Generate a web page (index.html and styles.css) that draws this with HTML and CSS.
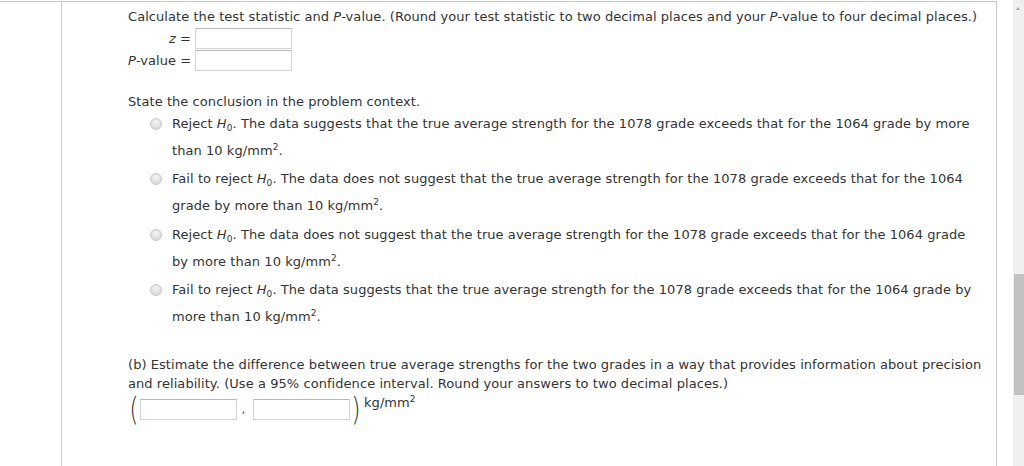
FILE: index.html
```html
<!DOCTYPE html>
<html>
<head>
<meta charset="utf-8">
<link rel="stylesheet" href="styles.css">
</head>
<body>
<div class="window">
  <div class="frame">
    <div class="content">
      <p class="intro">Calculate the test statistic and <i>P</i>-value. (Round your test statistic to two decimal places and your <i>P</i>-value to four decimal places.)</p>
      <div class="answers">
        <span class="lbl"><i>z</i> =</span><span class="box"></span>
        <span class="lbl"><i>P</i>-value =</span><span class="box"></span>
      </div>
      <p class="prompt">State the conclusion in the problem context.</p>
      <ul class="options">
        <li class="opt"><span class="radio"></span><span class="otext">Reject <i>H</i><sub>0</sub>. The data suggests that the true average strength for the 1078 grade exceeds that for the 1064 grade by more<br>than 10 kg/mm<sup>2</sup>.</span></li>
        <li class="opt"><span class="radio"></span><span class="otext">Fail to reject <i>H</i><sub>0</sub>. The data does not suggest that the true average strength for the 1078 grade exceeds that for the 1064<br>grade by more than 10 kg/mm<sup>2</sup>.</span></li>
        <li class="opt"><span class="radio"></span><span class="otext">Reject <i>H</i><sub>0</sub>. The data does not suggest that the true average strength for the 1078 grade exceeds that for the 1064 grade<br>by more than 10 kg/mm<sup>2</sup>.</span></li>
        <li class="opt"><span class="radio"></span><span class="otext">Fail to reject <i>H</i><sub>0</sub>. The data suggests that the true average strength for the 1078 grade exceeds that for the 1064 grade by<br>more than 10 kg/mm<sup>2</sup>.</span></li>
      </ul>
      <p class="partb">(b) Estimate the difference between true average strengths for the two grades in a way that provides information about precision<br>and reliability. (Use a 95% confidence interval. Round your answers to two decimal places.)</p>
      <div class="interval">
        <span class="paren">(</span><span class="box wide"></span><span class="comma">,</span><span class="box wide"></span><span class="paren">)</span><span class="unit">kg/mm<sup>2</sup></span>
      </div>
    </div>
  </div>
  <div class="scrollbar">
    <span class="arrow"></span>
    <span class="thumb"></span>
  </div>
</div>
</body>
</html>
```
FILE: styles.css
```css
html, body {
  margin: 0;
  padding: 0;
  background: #fff;
}
body {
  font-family: "DejaVu Sans", Verdana, sans-serif;
  font-size: 13px;
  letter-spacing: 0.06px;
  color: #333;
}
.window {
  display: flex;
  width: 1024px;
  height: 466px;
  overflow: hidden;
}
.frame {
  width: 997px;
  margin-top: 1px;
  border-top: 1px solid #c8c8c8;
  flex: none;
}
.content {
  margin-left: 61px;
  width: 936px;
  height: 464px;
  border-left: 1px solid #c8c8c8;
  border-right: 1px solid #c8c8c8;
  padding-left: 66px;
  box-sizing: border-box;
  white-space: nowrap;
}
p {
  margin: 0;
}
.intro {
  line-height: 16px;
  padding-top: 7px;
}
.answers {
  display: grid;
  grid-template-columns: 67px 97px;
  grid-auto-rows: 21px;
  row-gap: 1px;
  margin-top: 3px;
  align-items: center;
}
.lbl {
  text-align: right;
  padding-right: 4px;
}
.box {
  display: block;
  height: 21px;
  box-sizing: border-box;
  border: 1px solid #d4d4d4;
  border-top-color: #b8b8b8;
  background: #fff;
}
.prompt {
  margin-top: 23px;
  line-height: 16px;
}
.options {
  list-style: none;
  margin: 0;
  padding: 0 0 0 22px;
}
.opt {
  display: flex;
  align-items: flex-start;
  margin-bottom: 1.4px;
}
.radio {
  flex: none;
  width: 12px;
  height: 12px;
  margin-top: 8px;
  border-radius: 50%;
  box-sizing: border-box;
  border: 1px solid #c9c9c9;
  background: radial-gradient(circle at 50% 35%, #f4f4f4 0%, #e0e0e0 60%, #d2d2d2 100%);
}
.otext {
  margin-left: 10px;
  line-height: 27px;
}
sub {
  font-size: 9px;
  vertical-align: -3px;
  line-height: 0;
}
sup {
  font-size: 9px;
  vertical-align: 5px;
  line-height: 0;
}
.partb {
  margin-top: 25px;
  line-height: 19px;
}
.interval {
  display: flex;
  align-items: center;
  margin-top: 0;
  height: 32px;
}
.paren {
  font-size: 32px;
  font-weight: 200;
  line-height: 32px;
  width: 9px;
  text-align: center;
  transform: scaleX(0.75);
  display: inline-block;
  flex: none;
}
.box.wide {
  width: 97px;
  height: 21px;
  margin-left: 3px;
}
.comma {
  width: 13px;
  text-align: center;
  font-size: 11px;
}
.unit {
  margin-left: 5px;
  align-self: flex-start;
  margin-top: 2px;
}
.scrollbar {
  position: relative;
  width: 11px;
  margin-left: 16px;
  background: #f0f0f0;
  flex: none;
}
.arrow {
  position: absolute;
  left: 3px;
  top: 7px;
  width: 0;
  height: 0;
  border-left: 2.5px solid transparent;
  border-right: 2.5px solid transparent;
  border-bottom: 3px solid #a3a3a3;
}
.thumb {
  position: absolute;
  left: 1px;
  right: 0;
  top: 274px;
  height: 121px;
  background: #c1c1c1;
}
```
